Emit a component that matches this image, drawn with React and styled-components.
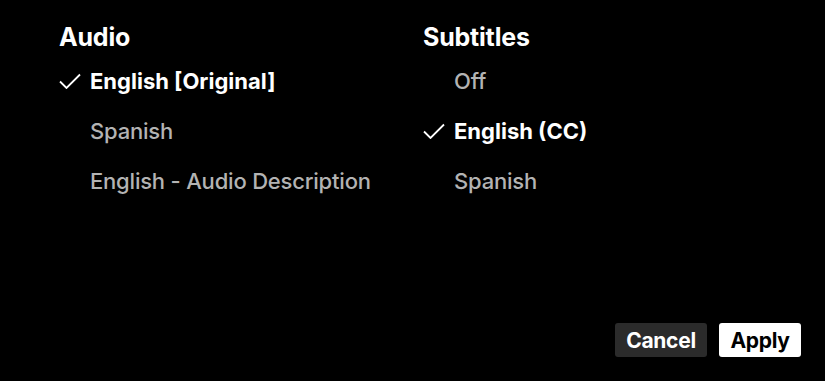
import React from 'react';
import styled, { createGlobalStyle } from 'styled-components';

const Global = createGlobalStyle`
  html, body { margin: 0; padding: 0; background: #000; }
  body { font-family: Inter, "Noto Sans", sans-serif; color: #fff; }
`;

const Page = styled.div`
  width: 825px;
  height: 381px;
  box-sizing: border-box;
  display: flex;
  flex-direction: column;
  justify-content: space-between;
  padding: 20px 24px 24px 59px;
`;

const Columns = styled.div`
  display: flex;
`;

const Column = styled.div`
  width: 364px;
  display: flex;
  flex-direction: column;
`;

const Heading = styled.h2`
  margin: 0 0 2px;
  font-size: 25px;
  font-weight: 700;
  line-height: 34px;
  letter-spacing: -0.2px;
`;

const Option = styled.div`
  display: flex;
  align-items: center;
  height: 50px;
  font-size: 22px;
  font-weight: ${(p) => (p.selected ? 700 : 500)};
  color: ${(p) => (p.selected ? '#fff' : '#b3b3b3')};
  letter-spacing: ${(p) => (p.selected ? '0' : '-0.2px')};
`;

const CheckSlot = styled.span`
  width: 31px;
  display: flex;
  align-items: center;
`;

const Footer = styled.div`
  display: flex;
  justify-content: flex-end;
  gap: 12px;
`;

const Button = styled.button`
  height: 34px;
  width: ${(p) => p.w}px;
  padding: 0;
  border: none;
  border-radius: 3px;
  font-family: Inter, "Noto Sans", sans-serif;
  font-size: 21px;
  font-weight: 700;
  letter-spacing: -0.3px;
  background: ${(p) => (p.primary ? '#fff' : '#2b2b2b')};
  color: ${(p) => (p.primary ? '#000' : '#fff')};
  cursor: pointer;
`;

const Check = () => (
  <svg width="22" height="16" viewBox="0 0 22 16" fill="none">
    <path d="M1 8.5 L7.5 15 L21 1.5" stroke="#fff" strokeWidth="1.8" />
  </svg>
);

const OptionList = ({ title, items, selected }) => (
  <Column>
    <Heading>{title}</Heading>
    {items.map((item) => (
      <Option key={item} selected={item === selected}>
        <CheckSlot>{item === selected && <Check />}</CheckSlot>
        {item}
      </Option>
    ))}
  </Column>
);

export default function App() {
  return (
    <>
      <Global />
      <Page>
        <Columns>
          <OptionList
            title="Audio"
            items={['English [Original]', 'Spanish', 'English - Audio Description']}
            selected="English [Original]"
          />
          <OptionList
            title="Subtitles"
            items={['Off', 'English (CC)', 'Spanish']}
            selected="English (CC)"
          />
        </Columns>
        <Footer>
          <Button w={92}>Cancel</Button>
          <Button primary w={82}>Apply</Button>
        </Footer>
      </Page>
    </>
  );
}
